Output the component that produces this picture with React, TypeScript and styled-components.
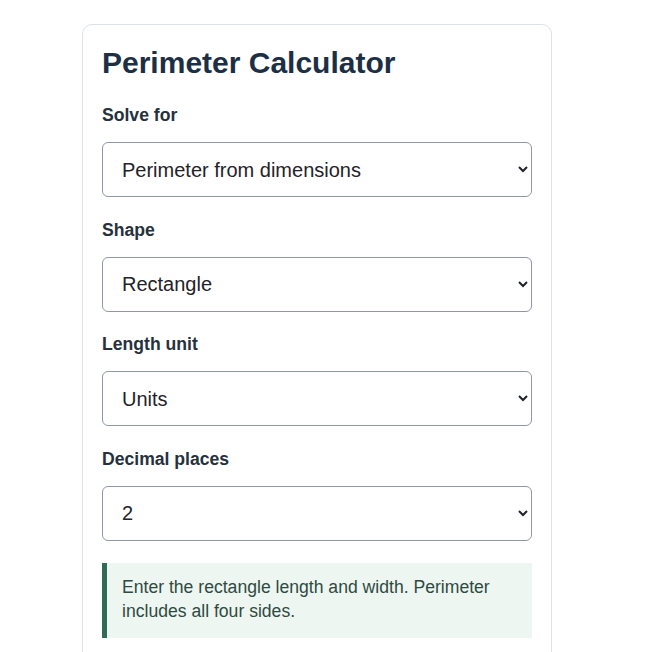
import React from "react";
import styled, { createGlobalStyle } from "styled-components";

const GlobalStyle = createGlobalStyle`
  html, body {
    margin: 0;
    padding: 0;
    background: #ffffff;
    font-family: "Liberation Sans", Arial, sans-serif;
  }
`;

const Page = styled.div`
  padding: 24px 0 40px 82px;
`;

const Card = styled.section`
  box-sizing: border-box;
  width: 470px;
  border: 1px solid #dde2e8;
  border-radius: 10px;
  padding: 20px 19px 24px;
  background: #fff;
`;

const Title = styled.h1`
  margin: 1px 0 25px;
  font-size: 30px;
  font-weight: 700;
  color: #1c2f45;
`;

const Field = styled.div`
  display: flex;
  flex-direction: column;
  margin-bottom: 22.6px;
`;

const Label = styled.label`
  font-size: 17.6px;
  font-weight: 700;
  color: #26313c;
  margin-bottom: 16px;
`;

const Select = styled.select`
  box-sizing: border-box;
  width: 100%;
  height: 55px;
  padding: 0 14px 0 15px;
  font-family: "Liberation Sans", Arial, sans-serif;
  font-size: 20px;
  color: #1f2329;
  background: #fff;
  border: 1px solid #8f98a4;
  border-radius: 6px;
`;

const Note = styled.div`
  margin-top: -0.6px;
  background: #eef6f2;
  border-left: 5px solid #2f6b56;
  padding: 12px 16px 15px 15px;
  font-size: 17.6px;
  line-height: 24px;
  color: #2e4a40;
`;

type FieldDef = { label: string; options: string[] };

const FIELDS: FieldDef[] = [
  {
    label: "Solve for",
    options: ["Perimeter from dimensions", "Dimension from perimeter"],
  },
  { label: "Shape", options: ["Rectangle", "Square", "Triangle", "Circle"] },
  { label: "Length unit", options: ["Units", "mm", "cm", "m", "in", "ft"] },
  { label: "Decimal places", options: ["2", "0", "1", "3", "4"] },
];

export default function App() {
  return (
    <Page>
      <GlobalStyle />
      <Card>
        <Title>Perimeter Calculator</Title>
        {FIELDS.map((f) => (
          <Field key={f.label}>
            <Label>{f.label}</Label>
            <Select defaultValue={f.options[0]}>
              {f.options.map((o) => (
                <option key={o}>{o}</option>
              ))}
            </Select>
          </Field>
        ))}
        <Note>
          Enter the rectangle length and width. Perimeter includes all four
          sides.
        </Note>
      </Card>
    </Page>
  );
}
